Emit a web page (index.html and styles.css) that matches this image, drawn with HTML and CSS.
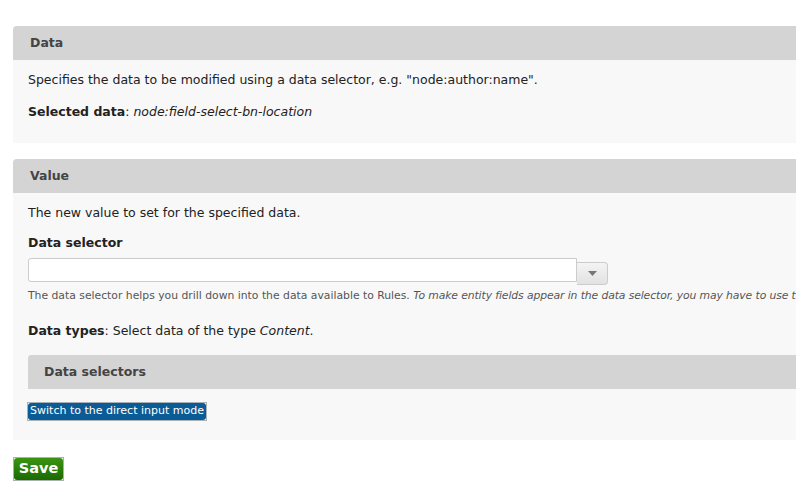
FILE: index.html
```html
<!DOCTYPE html>
<html>
<head>
<meta charset="utf-8">
<link rel="stylesheet" href="styles.css">
</head>
<body>
<div class="page">
  <section class="fieldset">
    <div class="legend">Data</div>
    <div class="body body-data">
      <p class="text">Specifies the data to be modified using a data selector, e.g. "node:author:name".</p>
      <p class="text second"><strong>Selected data</strong>: <em>node:field-select-bn-location</em></p>
    </div>
  </section>
  <section class="fieldset fieldset-value">
    <div class="legend">Value</div>
    <div class="body body-value">
      <p class="text">The new value to set for the specified data.</p>
      <label class="label">Data selector</label>
      <div class="combo">
        <input class="input" type="text">
        <span class="drop"><svg width="9" height="5" viewBox="0 0 9 5"><path d="M0 0 L9 0 L4.5 5 Z" fill="#777"/></svg></span>
      </div>
      <p class="desc">The data selector helps you drill down into the data available to Rules. <em>To make entity fields appear in the data selector, you may have to use the condition 'entity has field' (or 'content is of type').</em></p>
      <p class="text types"><strong>Data types</strong>: Select data of the type <em>Content</em>.</p>
      <div class="subfieldset">
        <div class="legend sublegend">Data selectors</div>
      </div>
      <button class="switch"><span class="switch-inner">Switch to the direct input mode</span></button>
    </div>
  </section>
  <button class="save"><span class="save-inner">Save</span></button>
</div>
</body>
</html>
```
FILE: styles.css
```css
html, body {
  margin: 0;
  padding: 0;
  background: #fff;
}
body {
  font-family: "DejaVu Sans", Verdana, sans-serif;
  font-size: 12.5px;
  color: #222;
  overflow: hidden;
  width: 796px;
  height: 502px;
}
.page {
  padding: 26px 0 0 13px;
  white-space: nowrap;
  width: 1100px;
}
.fieldset {
  background: #f8f8f8;
  border-radius: 4px 0 0 0;
}
.fieldset-value {
  margin-top: 16px;
}
.legend {
  background: #d4d4d4;
  height: 34px;
  line-height: 34px;
  padding-left: 17px;
  font-weight: bold;
  font-size: 12.5px;
  color: #444;
  border-radius: 4px 0 0 0;
}
.body {
  padding: 11px 15px 0 15px;
}
.body-data {
  padding-bottom: 22px;
}
.body-value {
  padding-bottom: 19px;
}
.text {
  margin: 0;
  line-height: 18px;
}
.second {
  margin-top: 14px;
}
.text strong {
  font-weight: bold;
}
.label {
  display: block;
  font-weight: bold;
  margin-top: 12px;
  line-height: 18px;
}
.combo {
  display: flex;
  align-items: flex-start;
  margin-top: 6px;
}
.input {
  width: 549px;
  height: 24px;
  box-sizing: border-box;
  border: 1px solid #ccc;
  border-radius: 3px 0 0 3px;
  background: #fff;
  margin: 0;
  padding: 0;
}
.drop {
  width: 31px;
  height: 23px;
  box-sizing: border-box;
  margin-top: 4px;
  border: 1px solid #ccc;
  border-left: none;
  border-radius: 0 4px 4px 0;
  background: linear-gradient(#f4f4f4, #e2e2e2);
  display: flex;
  align-items: center;
  justify-content: center;
}
.desc {
  margin: 4px 0 0 0;
  font-size: 10.8px;
  line-height: 14px;
  color: #555;
}
.desc em {
  letter-spacing: -0.1px;
}
.types {
  margin-top: 19px;
}
.subfieldset {
  margin-top: 15px;
  margin-right: -15px;
  background: #d4d4d4;
  border-radius: 4px 0 0 0;
}
.sublegend {
  padding-left: 16px;
}
.switch {
  display: block;
  margin: 13px 0 0 -1px;
  padding: 0;
  border: 1px solid #a9b1b8;
  background: #fff;
  height: 19px;
  width: 180px;
  box-sizing: border-box;
}
.switch-inner {
  display: block;
  height: 17px;
  line-height: 16px;
  background: #0b5c96;
  border-radius: 3px;
  color: #fff;
  font-family: "DejaVu Sans", Verdana, sans-serif;
  font-size: 11px;
  text-align: center;
}
.save {
  display: block;
  margin: 17px 0 0 0;
  padding: 0;
  border: 1px solid #a8b0b0;
  background: #fff;
  height: 24px;
  width: 51px;
  box-sizing: border-box;
}
.save-inner {
  display: block;
  height: 22px;
  line-height: 21px;
  border-radius: 3px;
  background: linear-gradient(#3a9414, #1b6a00);
  color: #fff;
  font-family: "DejaVu Sans", Verdana, sans-serif;
  font-weight: bold;
  font-size: 14.5px;
  text-align: center;
}
```
